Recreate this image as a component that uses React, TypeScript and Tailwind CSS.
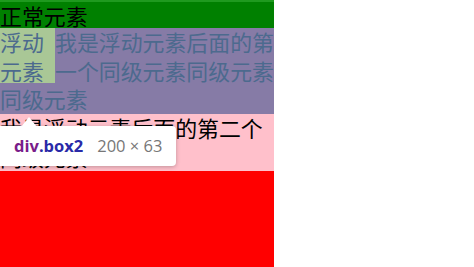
export default function App() {
  const cjk = { fontFamily: '"Noto Sans CJK SC", "Microsoft YaHei", sans-serif' };
  return (
    <div className="relative w-[474px] h-[267px] bg-white overflow-hidden" style={cjk}>
      <div className="w-[274px] text-[21.9px] leading-[28.7px]">
        <div className="h-[3px] bg-[#1f9a1f]" />
        <div className="h-[26px] bg-[#008000] text-black leading-[26px] -mt-[1px] pt-[1px]">正常元素</div>
        <div className="h-[86px] bg-[#867ba6] text-[#4c6a8e]">
          <div className="float-left w-[55px] h-[55px] bg-[#a9c796]">浮动元素</div>
          我是浮动元素后面的第一个同级元素同级元素同级元素
        </div>
        <div className="h-[57px] bg-[#ffc0cb] text-black">我是浮动元素后面的第二个同级元素</div>
        <div className="h-[100px] bg-[#ff0000]" />
      </div>
      <div className="absolute left-0 top-[126px] w-[176px] h-[40px] bg-white rounded-r-[4px] shadow-[0_1px_4px_rgba(0,0,0,0.25)] flex items-center pl-[14px] gap-[14px] text-[16.5px]" style={{ fontFamily: '"Open Sans", "Noto Sans", sans-serif' }}>
        <span className="font-bold"><span className="text-[#7a1d8a]">div</span><span className="text-[#2a2aa8]">.box2</span></span>
        <span className="text-[#777777]">200 × 63</span>
      </div>
      <div className="absolute left-[21px] top-[117px] w-0 h-0 border-l-[8px] border-r-[8px] border-b-[10px] border-l-transparent border-r-transparent border-b-white" />
    </div>
  );
}
